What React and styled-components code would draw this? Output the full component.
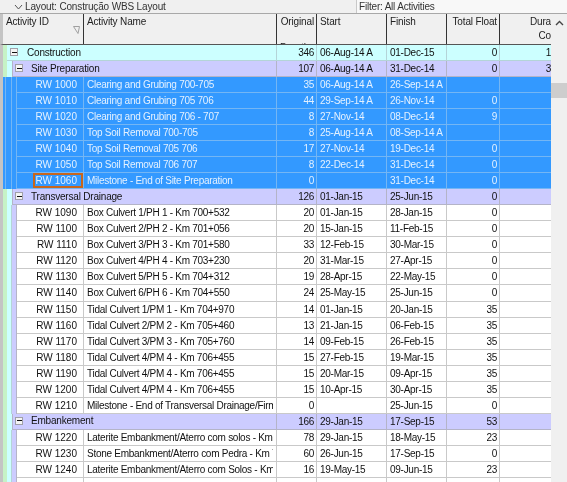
import styled, { createGlobalStyle } from 'styled-components';

const GlobalStyle = createGlobalStyle`
  html, body { margin: 0; padding: 0; background: #f0f0f0; overflow: hidden; }
`;

const Page = styled.div`
  width: 567px;
  height: 482px;
  overflow: hidden;
  display: flex;
  flex-direction: column;
  font-family: "Liberation Sans", Arial, sans-serif;
  font-size: 10px;
  color: #111;
  filter: blur(0.3px);
`;

const TopBar = styled.div`
  height: 13px;
  display: flex;
  background: #f0f0f0;
  border-bottom: 1px solid #a8a8a8;
`;

const LayoutLabel = styled.div`
  width: 356px;
  display: flex;
  align-items: center;
  gap: 2px;
  padding-left: 14px;
  box-sizing: border-box;
  color: #333;
  letter-spacing: -0.15px;
`;

const FilterLabel = styled.div`
  flex: 1;
  padding-left: 2px;
  border-left: 1px solid #c8c8c8;
  background: #f8f8f8;
  line-height: 13px;
  color: #333;
  letter-spacing: -0.2px;
`;

const Body = styled.div`
  flex: 1;
  display: flex;
  min-height: 0;
`;

const Grid = styled.div`
  width: 551px;
  overflow: hidden;
  background: #fff;
`;

const HeaderRow = styled.div`
  display: grid;
  grid-template-columns: 81px 193px 40px 70px 60px 53px 51px;
  height: 30px;
  background: #f0f0f0;
  border-bottom: 1px solid #555;
  border-left: 3px solid #c4c4c4;
`;

const HeaderCell = styled.div`
  position: relative;
  padding: 1px ${(p) => (p.$flush ? 0 : 2)}px 0 3px;
  border-right: ${(p) => (p.$flush ? 'none' : '1px solid #333')};
  overflow: hidden;
  text-align: ${(p) => (p.$right ? 'right' : 'left')};
  color: #222;
  line-height: 14px;
  letter-spacing: -0.15px;
  white-space: pre;
`;

const PeekLine = styled.span`
  display: block;
  margin-top: 12px;
`;

const SortMark = styled.svg`
  position: absolute;
  right: 3px;
  top: 12px;
`;

const Row = styled.div`
  display: flex;
  height: 16.04px;
  background: ${(p) => p.$bg};
  color: ${(p) => p.$fg};
`;

const Gutter = styled.div`
  width: ${(p) => p.$width}px;
  flex: none;
  background: ${(p) => p.$bg};
  border-right: ${(p) => (p.$line ? `1px solid ${p.$line}` : 'none')};
  box-sizing: border-box;
`;

const BandTitle = styled.div`
  flex: 1;
  display: flex;
  align-items: center;
  gap: ${(p) => p.$gap}px;
  padding-left: ${(p) => (p.$nested ? 2 : 3)}px;
  padding-bottom: 1px;
  box-sizing: border-box;
  border-left: ${(p) => (p.$nested ? '1px solid #b4b4c8' : 'none')};
  border-bottom: 1px solid ${(p) => p.$line};
  letter-spacing: -0.2px;
  white-space: nowrap;
  overflow: hidden;
`;

const BandCells = styled.div`
  display: flex;
  flex: none;
  width: 274px;
  box-shadow: -1px 0 0 ${(p) => p.$line};
`;

const Cell = styled.div`
  width: ${(p) => p.$width}px;
  flex: none;
  box-sizing: border-box;
  border-right: ${(p) => (p.$flush ? 'none' : `1px solid ${p.$line}`)};
  border-bottom: 1px solid ${(p) => p.$line};
  padding: 0 ${(p) => (p.$flush ? 0 : p.$right ? 2 : 0)}px 0 ${(p) => (p.$right ? 0 : 3)}px;
  text-align: ${(p) => (p.$right ? 'right' : 'left')};
  line-height: 15px;
  letter-spacing: -0.27px;
  white-space: nowrap;
  overflow: hidden;
`;

const IdCell = styled(Cell)`
  padding-right: 6px;
  text-align: right;
  letter-spacing: 0;
`;

const NameText = styled.span`
  display: block;
  margin-right: 3px;
  overflow: hidden;
`;

const FocusBox = styled.span`
  display: inline-block;
  width: 50px;
  height: 15px;
  box-sizing: border-box;
  margin-right: -6px;
  padding-right: 4px;
  border: 2px solid #c8661c;
  line-height: 11px;
  vertical-align: top;
`;

const Toggle = styled.span`
  width: 8px;
  height: 8px;
  flex: none;
  box-sizing: border-box;
  border: 1px solid #a0a0a8;
  background: #f4f4f4;
  display: flex;
  align-items: center;
  justify-content: center;
  &::before {
    content: '';
    width: 5px;
    height: 1px;
    background: #111;
  }
`;

const Scrollbar = styled.div`
  flex: 1;
  display: flex;
  flex-direction: column;
  align-items: center;
  background: #f0f0f0;
`;

const ScrollArrow = styled.svg`
  margin-top: 6px;
`;

const ScrollThumb = styled.div`
  width: 100%;
  height: 15px;
  margin-top: 57px;
  background: #cdcdcd;
`;

const cellSpecs = [
  { width: 40, right: true },
  { width: 70 },
  { width: 60 },
  { width: 53, right: true },
  { width: 51, right: true, flush: true },
];

const Band = ({ level, title, values }) => {
  const line = level === 0 ? '#b4d4d8' : '#b4b4c8';
  return (
    <Row $bg={level === 0 ? '#ccffff' : '#ccccff'} $fg="#111">
      <Gutter $width={3} $bg="#c4c4c4" />
      <Gutter $width={4} $bg="#c6f2c6" />
      {level === 1 && <Gutter $width={5} $bg="#ccffff" />}
      <BandTitle $gap={level === 0 ? 9 : 8} $nested={level === 1} $line={line}>
        <Toggle />
        {title}
      </BandTitle>
      <BandCells $line={line}>
        {cellSpecs.map((c, i) => (
          <Cell key={i} $width={c.width} $right={c.right} $flush={c.flush} $line={line}>{values[i]}</Cell>
        ))}
      </BandCells>
    </Row>
  );
};

const Activity = ({ id, name, dur, start, finish, flt, selected, focus }) => {
  const line = selected ? '#74b6f4' : '#c9c9c9';
  const values = [dur, start, finish, flt, ''];
  return (
    <Row $bg={selected ? '#3399ff' : '#ffffff'} $fg={selected ? '#e4f1ff' : '#111'}>
      <Gutter $width={3} $bg="#c4c4c4" />
      {selected ? (
        <>
          <Gutter $width={3} $bg="#3399ff" $line={line} />
          <Gutter $width={6} $bg="#3399ff" $line={line} />
          <Gutter $width={5} $bg="#3399ff" $line={line} />
        </>
      ) : (
        <>
          <Gutter $width={4} $bg="#c6f2c6" />
          <Gutter $width={5} $bg="#ccffff" $line="#b4d4d8" />
          <Gutter $width={5} $bg="#ccccff" $line="#b4b4c8" />
        </>
      )}
      <IdCell $line={line} $width={67}>{focus ? <FocusBox>{id}</FocusBox> : id}</IdCell>
      <Cell $line={line} $width={193}><NameText>{name}</NameText></Cell>
      {cellSpecs.map((c, i) => (
        <Cell key={i} $width={c.width} $right={c.right} $flush={c.flush} $line={line}>{values[i]}</Cell>
      ))}
    </Row>
  );
};

const rows = [
  { band: 0, title: 'Construction', values: ['346', '06-Aug-14 A', '01-Dec-15', '0', '1'] },
  { band: 1, title: 'Site Preparation', values: ['107', '06-Aug-14 A', '31-Dec-14', '0', '3'] },
  { id: 'RW 1000', name: 'Clearing and Grubing 700-705', dur: 35, start: '06-Aug-14 A', finish: '26-Sep-14 A', flt: '', selected: true },
  { id: 'RW 1010', name: 'Clearing and Grubing 705 706', dur: 44, start: '29-Sep-14 A', finish: '26-Nov-14', flt: 0, selected: true },
  { id: 'RW 1020', name: 'Clearing and Grubing 706 - 707', dur: 8, start: '27-Nov-14', finish: '08-Dec-14', flt: 9, selected: true },
  { id: 'RW 1030', name: 'Top Soil Removal 700-705', dur: 8, start: '25-Aug-14 A', finish: '08-Sep-14 A', flt: '', selected: true },
  { id: 'RW 1040', name: 'Top Soil Removal 705 706', dur: 17, start: '27-Nov-14', finish: '19-Dec-14', flt: 0, selected: true },
  { id: 'RW 1050', name: 'Top Soil Removal 706 707', dur: 8, start: '22-Dec-14', finish: '31-Dec-14', flt: 0, selected: true },
  { id: 'RW 1060', name: 'Milestone - End of Site Preparation', dur: 0, start: '', finish: '31-Dec-14', flt: 0, selected: true, focus: true },
  { band: 1, title: 'Transversal Drainage', values: ['126', '01-Jan-15', '25-Jun-15', '0', ''] },
  { id: 'RW 1090', name: 'Box Culvert 1/PH 1 - Km 700+532', dur: 20, start: '01-Jan-15', finish: '28-Jan-15', flt: 0 },
  { id: 'RW 1100', name: 'Box Culvert 2/PH 2 - Km 701+056', dur: 20, start: '15-Jan-15', finish: '11-Feb-15', flt: 0 },
  { id: 'RW 1110', name: 'Box Culvert 3/PH 3 - Km 701+580', dur: 33, start: '12-Feb-15', finish: '30-Mar-15', flt: 0 },
  { id: 'RW 1120', name: 'Box Culvert 4/PH 4 - Km 703+230', dur: 20, start: '31-Mar-15', finish: '27-Apr-15', flt: 0 },
  { id: 'RW 1130', name: 'Box Culvert 5/PH 5 - Km 704+312', dur: 19, start: '28-Apr-15', finish: '22-May-15', flt: 0 },
  { id: 'RW 1140', name: 'Box Culvert 6/PH 6 - Km 704+550', dur: 24, start: '25-May-15', finish: '25-Jun-15', flt: 0 },
  { id: 'RW 1150', name: 'Tidal Culvert 1/PM 1 - Km 704+970', dur: 14, start: '01-Jan-15', finish: '20-Jan-15', flt: 35 },
  { id: 'RW 1160', name: 'Tidal Culvert 2/PM 2 - Km 705+460', dur: 13, start: '21-Jan-15', finish: '06-Feb-15', flt: 35 },
  { id: 'RW 1170', name: 'Tidal Culvert 3/PM 3 - Km 705+760', dur: 14, start: '09-Feb-15', finish: '26-Feb-15', flt: 35 },
  { id: 'RW 1180', name: 'Tidal Culvert 4/PM 4 - Km 706+455', dur: 15, start: '27-Feb-15', finish: '19-Mar-15', flt: 35 },
  { id: 'RW 1190', name: 'Tidal Culvert 4/PM 4 - Km 706+455', dur: 15, start: '20-Mar-15', finish: '09-Apr-15', flt: 35 },
  { id: 'RW 1200', name: 'Tidal Culvert 4/PM 4 - Km 706+455', dur: 15, start: '10-Apr-15', finish: '30-Apr-15', flt: 35 },
  { id: 'RW 1210', name: 'Milestone - End of Transversal Drainage/Firm', dur: 0, start: '', finish: '25-Jun-15', flt: 0 },
  { band: 1, title: 'Embankement', values: ['166', '29-Jan-15', '17-Sep-15', '53', ''] },
  { id: 'RW 1220', name: 'Laterite Embankment/Aterro com solos - Km', dur: 78, start: '29-Jan-15', finish: '18-May-15', flt: 23 },
  { id: 'RW 1230', name: 'Stone Embankment/Aterro com Pedra - Km 7', dur: 60, start: '26-Jun-15', finish: '17-Sep-15', flt: 0 },
  { id: 'RW 1240', name: 'Laterite Embankment/Aterro com Solos - Km', dur: 16, start: '19-May-15', finish: '09-Jun-15', flt: 23 },
  { id: '', name: '', dur: '', start: '', finish: '', flt: '' },
];

const App = () => (
  <Page>
    <GlobalStyle />
    <TopBar>
      <LayoutLabel>
        <svg width="9" height="6" viewBox="0 0 9 6"><path d="M1 1l3.5 4L8 1" fill="none" stroke="#555" /></svg>
        Layout: Construção WBS Layout
      </LayoutLabel>
      <FilterLabel>Filter: All Activities</FilterLabel>
    </TopBar>
    <Body>
      <Grid>
        <HeaderRow>
          <HeaderCell>
            Activity ID
            <SortMark width="7" height="8" viewBox="0 0 7 8"><path d="M0.5 0.5H6.5L5 7.5Z" fill="none" stroke="#a0a0a0" /></SortMark>
          </HeaderCell>
          <HeaderCell>Activity Name</HeaderCell>
          <HeaderCell $right>Original<PeekLine>Duration</PeekLine></HeaderCell>
          <HeaderCell>Start</HeaderCell>
          <HeaderCell>Finish</HeaderCell>
          <HeaderCell $right>Total Float</HeaderCell>
          <HeaderCell $right $flush>{'Dura\nCo'}</HeaderCell>
        </HeaderRow>
        {rows.map((r, i) =>
          r.band !== undefined
            ? <Band key={i} level={r.band} title={r.title} values={r.values} />
            : <Activity key={i} {...r} />
        )}
      </Grid>
      <Scrollbar>
        <ScrollArrow width="9" height="6" viewBox="0 0 9 6"><path d="M1 5l3.5-3.5L8 5" fill="none" stroke="#444" strokeWidth="1.4" /></ScrollArrow>
        <ScrollThumb />
      </Scrollbar>
    </Body>
  </Page>
);

export default App;
